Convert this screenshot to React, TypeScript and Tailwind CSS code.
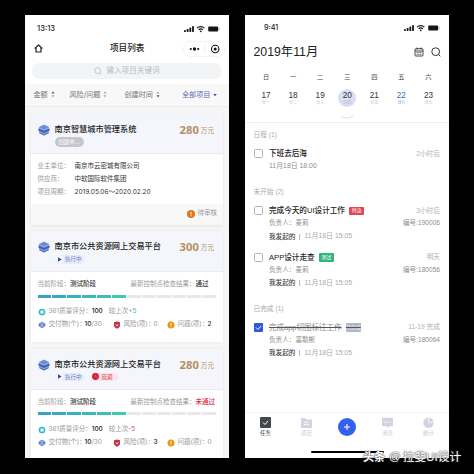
import React from 'react';

const FONT = "font-[Inter,'Noto_Sans_CJK_SC',sans-serif]";

function StatusIcons() {
  return (
    <svg width="36" height="8" viewBox="0 0 36 8" fill="#151515">
      <rect x="0" y="5" width="1.8" height="2" rx=".4" />
      <rect x="2.7" y="4" width="1.8" height="3" rx=".4" />
      <rect x="5.4" y="2.6" width="1.8" height="4.4" rx=".4" />
      <rect x="8.1" y="1" width="1.8" height="6" rx=".4" />
      <path d="M13 3.1a5.3 5.3 0 0 1 7.4 0M14.6 4.8a3 3 0 0 1 4.2 0" fill="none" stroke="#151515" strokeWidth="1.2" />
      <circle cx="16.7" cy="6.3" r=".9" />
      <rect x="24.2" y="1.6" width="10" height="4.9" rx="1" />
      <rect x="34.8" y="3" width=".8" height="2" rx=".4" fill="#aaa" />
    </svg>
  );
}

function Cube() {
  return (
    <svg width="12" height="12" viewBox="0 0 12 12">
      <path d="M6 .6 11 3v6L6 11.6 1 9V3Z" fill="#8fa6e0" />
      <path d="M6 1 10.6 3 6 5.2 1.4 3Z" fill="#6f8bd3" />
      <path d="M.4 4.4 6 6.8l5.6-2.4v2L6 8.9.4 6.4Z" fill="#3f5fb5" />
      <path d="M1.6 8.2 6 10.3l4.4-2.1V9.3L6 11.5 1.6 9.3Z" fill="#4c6bbf" />
    </svg>
  );
}

function Sorter({ up, down }: { up: string; down: string }) {
  return (
    <svg width="4" height="7" viewBox="0 0 4 7" className="ml-[3px]">
      <path d="M2 .3 3.5 2.4h-3Z" fill={up} />
      <path d="M2 6.4 3.5 4.3h-3Z" fill={down} />
    </svg>
  );
}

function Price({ value }: { value: string }) {
  return (
    <div className="ml-auto mt-[1px] flex h-[12px] items-center text-[#b3905c]">
      <span className="font-['Noto_Sans',sans-serif] text-[11.2px] font-bold leading-[12px]">{value}</span>
      <span className="ml-[2px] pt-[2px] text-[6.6px] leading-[12px]">万元</span>
    </div>
  );
}

function Running() {
  return (
    <span className="flex h-[8.5px] w-[29px] items-center rounded-full bg-[#e6ebf9] text-[5.5px] text-[#6c83bd]">
      <svg width="9" height="9" viewBox="0 0 9 9"><circle cx="4.5" cy="4.5" r="4.2" fill="#f5f8ff" /><path d="M3 2.3 6.7 4.5 3 6.7Z" fill="#31508f" /></svg>
      <span className="ml-[1.5px]">执行中</span>
    </span>
  );
}

function Late() {
  return (
    <span className="ml-[7px] flex h-[8.5px] w-[27px] items-center rounded-full bg-[#fbe5ea] text-[5.5px] text-[#d8414d]">
      <svg width="9" height="9" viewBox="0 0 9 9"><circle cx="4.5" cy="4.5" r="3.4" fill="#d71f31" /><path d="M4.5 2.8v2h1.4" fill="none" stroke="#ee7f88" strokeWidth=".6" /></svg>
      <span className="ml-[2px]">延期</span>
    </span>
  );
}

const SEGMENTS = [
  'bg-[#37a3c4]', 'bg-[#37aac3]', 'bg-[#38b0bf]', 'bg-[#3bb8bb]', 'bg-[#3dbfb5]', 'bg-[#43c8b0]',
  'bg-[#e8e8e8]', 'bg-[#e8e8e8]', 'bg-[#e8e8e8]', 'bg-[#e8e8e8]', 'bg-[#e8e8e8]', 'bg-[#e8e8e8]',
];

type ProjectProps = { price: string; late?: boolean; result: string; delta: string; risk: string; issue: string };

function Project({ price, late, result, delta, risk, issue }: ProjectProps) {
  return (
    <section className="h-[111px] w-[192px] shrink-0 bg-white shadow-[0_0_4px_rgba(0,0,0,0.05)]">
      <div className="flex h-[41px] border-b border-[#e9ebf4] bg-[#f5f6fc] pl-[6.5px] pr-[9px] pt-[9px]">
        <div className="mt-[1px]"><Cube /></div>
        <div className="ml-[5px]">
          <div className="h-[12px] whitespace-nowrap text-[8.2px] font-medium leading-[12px] text-[#222]">南京市公共资源网上交易平台</div>
          <div className="mt-[3px] flex">
            <Running />
            {late && <Late />}
          </div>
        </div>
        <Price value={price} />
      </div>
      <div className="pl-[6.5px] pr-[7px]">
        <div className="mt-[8px] flex h-[10px] items-center text-[6.5px] text-[#999]">
          <span>当前阶段：</span>
          <span className="font-medium text-[#333]">测试阶段</span>
          <span className="ml-[34.5px]">最新控制点检查结果：</span>
          <span className={late ? 'font-medium text-[#d6313f]' : 'font-medium text-[#333]'}>{result}</span>
        </div>
        <div className="mt-[4.5px] flex h-[3px] gap-[1px]">
          {SEGMENTS.map((color, i) => <i key={i} className={`h-[3px] flex-1 ${color}`} />)}
        </div>
        <div className="mt-[9.5px] flex h-[10px] items-center text-[6.5px] text-[#999]">
          <svg width="8" height="8" viewBox="0 0 8 8" className="mr-[3px]"><circle cx="4" cy="4" r="2.6" fill="#e4fbfb" stroke="#31b9cf" strokeWidth="1.5" /></svg>
          <span>361质量评分：</span>
          <span className="font-medium text-[#222]">100</span>
          <span className="ml-[6px]">较上次</span>
          <span className={late ? 'text-[#dd5260]' : 'text-[#3fbb8b]'}>{delta}</span>
        </div>
        <div className="mt-[3px] flex h-[10px] items-center text-[6.5px] text-[#999]">
          <svg width="8" height="8" viewBox="0 0 8 8" className="mr-[3px]"><path d="M4 .8 7 2.2 7.4 5 4 7.2.6 5 1 2.2Z" fill="#5b76c7" /><path d="m.8 2.5 3.2 1.6 3.2-1.6L4 1Z" fill="#93a8e2" /><path d="M2.5 5h3" stroke="#fff" strokeWidth=".8" /></svg>
          <span className="w-[36px] whitespace-nowrap">交付物(个)：</span>
          <span className="w-[28px]"><b className="font-medium text-[#222]">10</b>/30</span>
          <svg width="8" height="8" viewBox="0 0 8 8" className="mr-[3px]"><path d="M4 .4 7 1.3v3.2C7 6.2 5.3 7.2 4 7.8 2.7 7.2 1 6.2 1 4.5V1.3Z" fill="#c53342" /><path d="M2.8 3.7 4 5l1.3-1.8" fill="none" stroke="#fff" strokeWidth=".8" /></svg>
          <span className="w-[30px] whitespace-nowrap">风险(项)：</span>
          <span className={risk === '0' ? 'w-[13px]' : 'w-[13px] font-medium text-[#222]'}>{risk}</span>
          <svg width="8" height="8" viewBox="0 0 8 8" className="mr-[3px]"><circle cx="4" cy="4" r="3.5" fill="#e79518" /><path d="M4 2v2.5M4 5.3v.9" stroke="#fff" strokeWidth=".9" /></svg>
          <span className="w-[30px] whitespace-nowrap">问题(项)：</span>
          <span className={issue === '0' ? '' : 'font-medium text-[#222]'}>{issue}</span>
        </div>
      </div>
    </section>
  );
}

function InfoRow({ label, value }: { label: string; value: string }) {
  return (
    <div className="flex h-[13px] items-center text-[6.5px]">
      <span className="w-[37px] text-[#999]">{label}</span>
      <span className="text-[#333]">{value}</span>
    </div>
  );
}

function ProjectPhone() {
  return (
    <div className="flex h-[443px] w-[204px] flex-col overflow-hidden bg-[#f6f6f6]">
      <div className="h-[69px] shrink-0 bg-white">
        <div className="flex h-[26px] items-center pl-[12px] pr-[9px] pt-[1px]">
          <span className="pt-[1px] text-[7.6px] font-medium text-[#222]">13:13</span>
          <span className="ml-auto"><StatusIcons /></span>
        </div>
        <div className="flex h-[15px] items-center pl-[8.5px] pr-[4px]">
          <svg width="9" height="9" viewBox="0 0 9 9" fill="none" stroke="#222" strokeWidth="1.2"><path d="M4.5 1 8 4.2H7V8H2V4.2H1Z" strokeLinejoin="round" /></svg>
          <span className="ml-[67.5px] text-[8.6px] font-medium text-[#222]">项目列表</span>
          <div className="ml-auto flex h-[16px] w-[42px] items-center rounded-full border border-[#f3f3f3] pl-[5px]">
            <svg width="34" height="10" viewBox="0 0 34 10" fill="#111"><circle cx="1.8" cy="5" r="1.1" /><circle cx="5.5" cy="5" r="1.7" /><circle cx="9.2" cy="5" r="1.1" /><path d="M15.5 0h.6v10h-.6Z" fill="#e4e4e4" /><circle cx="26.2" cy="5" r="3.7" fill="none" stroke="#111" strokeWidth="1.1" /><circle cx="26.2" cy="5" r="1.5" /></svg>
          </div>
        </div>
        <div className="mx-[7px] mt-[7px] flex h-[16px] items-center justify-center rounded-full bg-[#f3f4f6] text-[7.6px] text-[#b8bbc0]">
          <svg width="8" height="8" viewBox="0 0 8 8" className="mr-[4px]" fill="none" stroke="#b8bbc0" strokeWidth=".8"><circle cx="3.6" cy="3.6" r="2.9" /><path d="m5.8 5.8 1.7 1.7" /></svg>
          <span>输入项目关键词</span>
        </div>
      </div>
      <div className="flex h-[23px] shrink-0 items-center border-b border-[#ececec] bg-[#f8f8f9] pl-[8.5px] text-[7.1px] text-[#777]">
        <div className="flex w-[36px] items-center">金额<Sorter up="#47549a" down="#aaa" /></div>
        <div className="flex w-[55px] items-center">风险/问题<Sorter up="#aaa" down="#aaa" /></div>
        <div className="flex w-[57.5px] items-center">创建时间<Sorter up="#aaa" down="#3d4f9d" /></div>
        <div className="flex items-center text-[#566bb0]">全部项目<svg width="4" height="4" viewBox="0 0 4 4" className="ml-[3px]"><path d="M.2 1h3.6L2 3.3Z" fill="#3d4f9d" /></svg></div>
      </div>
      <div className="flex flex-col items-center gap-[6.5px] pt-[6px]">
        <section className="h-[111.5px] w-[192px] shrink-0 bg-[#f8f8f8] shadow-[0_1px_3px_rgba(0,0,0,0.08)]">
          <div className="flex h-[41px] border-b border-[#e9ebf4] bg-[#f5f6fc] pl-[6.5px] pr-[9px] pt-[10px]">
            <div className="mt-[1px]"><Cube /></div>
            <div className="ml-[5px]">
              <div className="h-[12px] whitespace-nowrap text-[8.2px] font-medium leading-[12px] text-[#222]">南京智慧城市管理系统</div>
              <div className="mt-[2px] flex h-[10px] w-[29px] items-center justify-center rounded-full bg-[#c5c6cb] text-[5.5px] text-white">创建中...</div>
            </div>
            <Price value="280" />
          </div>
          <div className="h-[50px] bg-white pl-[6.5px] pt-[6px]">
            <InfoRow label="业主单位：" value="南京市云密城有限公司" />
            <InfoRow label="供应商：" value="中软国际软件集团" />
            <InfoRow label="项目周期：" value="2019.05.06～2020.02.20" />
          </div>
          <div className="flex h-[20px] items-center justify-end pr-[6px] text-[6.5px] text-[#999]">
            <svg width="8" height="8" viewBox="0 0 8 8" className="mr-[3px]"><circle cx="4" cy="4" r="4" fill="#e2761c" /><path d="M4 1.8v2.8M4 5.3v.9" stroke="#fff" strokeWidth="1" /></svg>
            <span>待审核</span>
          </div>
        </section>
        <Project price="300" result="通过" delta="+5" risk="0" issue="2" />
        <Project price="280" late result="未通过" delta="-5" risk="3" issue="0" />
      </div>
    </div>
  );
}

const DAYS = [
  ['日', '17', '廿一'], ['一', '18', '廿二'], ['二', '19', '廿三'], ['三', '20', '廿四'],
  ['四', '21', '廿五'], ['五', '22', '廿六'], ['六', '23', '廿七'],
];

function Check({ on }: { on?: boolean }) {
  return on ? (
    <svg width="9" height="9" viewBox="0 0 9 9" className="shrink-0"><rect width="9" height="9" rx="1" fill="#3157e0" /><path d="m2 4.5 1.9 1.9L7.2 3" fill="none" stroke="#fff" /></svg>
  ) : (
    <span className="block size-[9px] shrink-0 rounded-[1.5px] border border-[#b5b5b5]" />
  );
}

type TaskProps = { title: string; tag: string; tagClass: string; time: string; owner: string; code: string; done?: boolean };

function Task({ title, tag, tagClass, time, owner, code, done }: TaskProps) {
  return (
    <div className="flex">
      <div className="pt-[1px]"><Check on={done} /></div>
      <div className="ml-[6.5px] flex-1 whitespace-nowrap">
        <div className="flex h-[12px] items-center">
          <span className={done ? 'text-[7.5px] text-[#888] line-through decoration-[#555]' : 'text-[7.6px] font-medium text-[#222]'}>{title}</span>
          <span className={`ml-[4px] flex h-[8.5px] w-[15.5px] items-center justify-center rounded-[1px] text-[5px] ${tagClass}`}>{tag}</span>
          <span className="ml-auto text-[6.7px] text-[#b2b2b2]">{time}</span>
        </div>
        <div className="flex h-[12px] items-center justify-between text-[6.6px] text-[#8e8e8e]">
          <span>负责人：{owner}</span><span>编号:{code}</span>
        </div>
        <div className="mt-[2px] flex h-[11px] items-center text-[6.6px] text-[#aaa]">
          <span className="font-medium text-[#444]">我发起的</span><span className="mx-[4px] h-[6px] w-px bg-[#bbb]" /><span className="text-[6.9px]">11月18日 15:05</span>
        </div>
      </div>
    </div>
  );
}

function TaskPhone() {
  return (
    <div className="flex h-[443px] w-[204px] flex-col overflow-hidden bg-white font-['Liberation_Sans','Noto_Sans_CJK_SC',sans-serif]">
      <div className="flex h-[26px] shrink-0 items-center pl-[19px] pr-[9px]">
        <span className={`text-[7.2px] font-medium text-[#222] ${FONT}`}>9:41</span>
        <span className="ml-auto"><StatusIcons /></span>
      </div>
      <div className="flex h-[22px] shrink-0 items-center pl-[8.5px] pr-[8px]">
        <span className="text-[12.3px] leading-[16px] text-[#222]">2019年11月</span>
        <svg width="10" height="10" viewBox="0 0 10 10" className="ml-auto" fill="none" stroke="#333" strokeWidth=".9"><rect x="1" y="1.7" width="8" height="7.3" rx=".8" /><path d="M1 4h8M3 .5v2M7 .5v2" /><path d="M2.6 5.6h4.8M2.6 7.3h4.8" strokeDasharray="1.1 .7" /></svg>
        <svg width="10" height="10" viewBox="0 0 10 10" className="ml-[7px]" fill="none" stroke="#333" strokeWidth="1"><circle cx="4.7" cy="4.7" r="3.9" /><path d="m7.5 7.5 1.8 1.8" /></svg>
      </div>
      <div className="grid h-[49px] shrink-0 grid-cols-7 pl-[7.5px] pr-[7px] pt-[9px]">
        {DAYS.map(([week, day, lunar]) => (
          <div key={day} className="flex flex-col items-center">
            <span className="h-[10px] text-[6.2px] leading-[10px] text-[#444]">{week}</span>
            <div className={`mt-[7px] flex size-[18px] flex-col items-center rounded-full pt-[2px] ${day === '20' ? 'bg-[#d9def5]' : ''}`}>
              <span className={`h-[9px] text-[8.2px] leading-[9px] ${day === '22' ? 'text-[#3e6ab8]' : 'text-[#333]'}`}>{day}</span>
              <span className={`h-[5px] text-[4px] leading-[5px] ${day === '22' ? 'text-[#6d91cf]' : 'text-[#b5b9c6]'}`}>{lunar}</span>
            </div>
          </div>
        ))}
      </div>
      <div className="flex h-[11px] shrink-0 items-center justify-center border-b border-[#f0f0f0]">
        <svg width="14" height="5" viewBox="0 0 14 5"><path d="M1 1q6 4 12 0" fill="none" stroke="#ddd" strokeWidth="1" /></svg>
      </div>
      <div className="flex flex-1 flex-col pl-[8.5px] pr-[9px] text-[6.7px] text-[#aaa]">
        <div className="mt-[7px] h-[10px] leading-[10px]">日程 (1)</div>
        <div className="mt-[8px] flex">
          <div className="pt-[1px]"><Check /></div>
          <div className="ml-[6.5px] flex-1">
            <div className="flex h-[12px] items-center justify-between">
              <span className="text-[7.6px] font-medium text-[#222]">下班去后海</span>
              <span className="text-[6.7px] text-[#b2b2b2]">2小时后</span>
            </div>
            <div className="h-[12px] text-[6.9px] leading-[12px] text-[#8e8e8e]">11月18日 18:00</div>
          </div>
        </div>
        <div className="mt-[15px] h-[10px] leading-[10px]">未开始 (2)</div>
        <div className="mt-[8px]"><Task title="完成今天的UI设计工作" tag="特急" tagClass="bg-[#e34653] text-white" time="3小时后" owner="麦莉" code="190006" /></div>
        <div className="mt-[9.5px]"><Task title="APP设计走查" tag="测试" tagClass="bg-[#31b57c] text-white" time="明天" owner="麦莉" code="180056" /></div>
        <div className="mt-[15px] h-[10px] leading-[10px]">已完成 (1)</div>
        <div className="mt-[8px]"><Task done title="完成app切图标注工作" tag="已完成" tagClass="bg-[#aeb7c8] text-[#eee] line-through decoration-[#555]" time="11-19 完成" owner="塞勒斯" code="180064" /></div>
      </div>
      <div className="h-[46px] shrink-0 border-t border-[#f3f3f3]">
        <div className="flex h-[24px] items-start text-center text-[5.4px] text-[#c9cbd8]">
          <div className="flex w-[41px] flex-col items-center pt-[3.5px] text-[#444]">
            <svg width="11" height="11" viewBox="0 0 11 11"><rect width="11" height="11" rx="1" fill="#45474f" /><path d="m3 5.5 2 2 3.2-3.7" fill="none" stroke="#fff" strokeWidth="1" /></svg>
            <span className="mt-[1px] leading-[8px]">任务</span>
          </div>
          <div className="flex w-[41px] flex-col items-center pt-[3.5px]">
            <svg width="11" height="11" viewBox="0 0 11 11"><path d="M0 1h4.5l1 1.4H11V11H0Z" fill="#d3d4e3" /><path d="M3 5.3h5M3 7.6h5" stroke="#fff" strokeWidth=".9" /></svg>
            <span className="mt-[1px] leading-[8px]">项目</span>
          </div>
          <div className="flex w-[40px] justify-center pt-[4.5px]">
            <svg width="18" height="18" viewBox="0 0 18 18"><circle cx="9" cy="9" r="9" fill="#355fee" /><path d="M9 6v6M6 9h6" stroke="#fff" strokeWidth="1.1" /></svg>
          </div>
          <div className="flex w-[41px] flex-col items-center pt-[3.5px]">
            <svg width="11" height="11" viewBox="0 0 11 11"><path d="M0 .8h11v8.4H7L5.5 10.7 4 9.2H0Z" fill="#d3d4e3" /><path d="M2.5 5.2h6" stroke="#fff" strokeWidth="1" strokeDasharray="1.2 1.1" /></svg>
            <span className="mt-[1px] leading-[8px]">消息</span>
          </div>
          <div className="flex w-[41px] flex-col items-center pt-[3.5px]">
            <svg width="11" height="11" viewBox="0 0 11 11"><circle cx="5.5" cy="5.7" r="5.2" fill="#d3d4e3" /><path d="M5.8.3v5h5" fill="none" stroke="#fff" strokeWidth=".9" /></svg>
            <span className="mt-[1px] leading-[8px]">统计</span>
          </div>
        </div>
        <div className="mx-auto mt-[13.5px] h-[2.5px] w-[73px] rounded-full bg-black" />
      </div>
    </div>
  );
}

export default function App() {
  return (
    <main className={`relative flex h-[474px] w-[474px] gap-[16px] overflow-hidden bg-black pl-[25px] pt-[15px] ${FONT}`}>
      <ProjectPhone />
      <TaskPhone />
      <div className="absolute left-[363px] top-[449px] flex h-[16px] items-center whitespace-nowrap font-['Liberation_Sans','Noto_Sans_CJK_SC',sans-serif] text-[11px] text-white [text-shadow:0_0_1px_#333,0_0_2px_#555]">
        <span className="font-bold">头条</span><span className="ml-[4px] text-[11.5px]">@</span><span className="ml-[2px] text-[11.7px]">拉斐UI设计</span>
      </div>
    </main>
  );
}
